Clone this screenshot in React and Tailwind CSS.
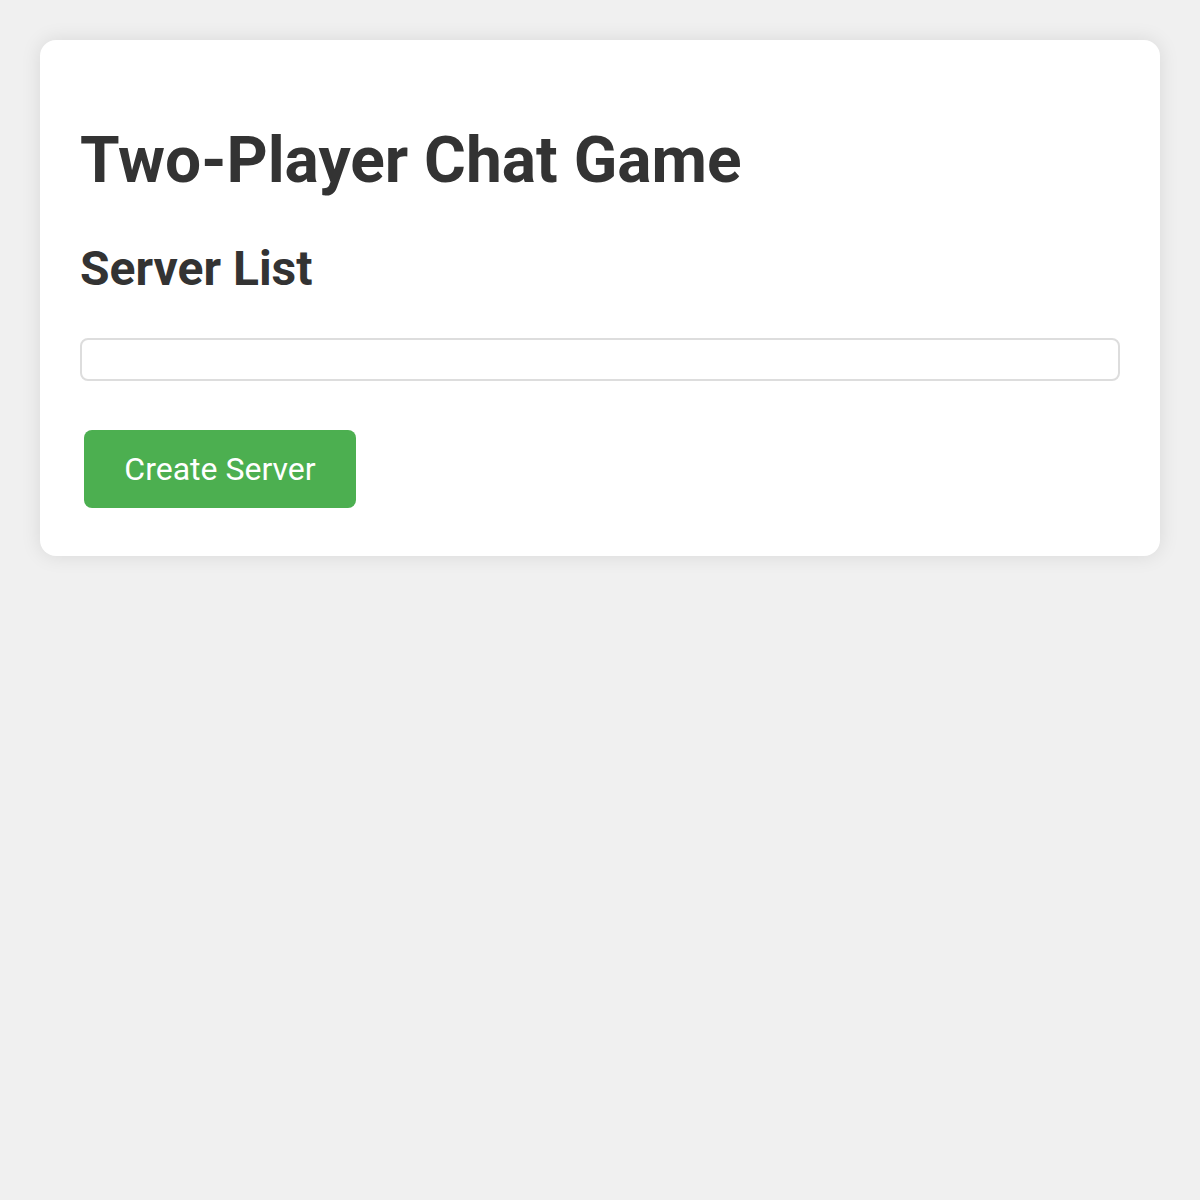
export default function App() {
  return (
    <div className="min-h-[1200px] bg-[#f0f0f0] p-10" style={{ fontFamily: "Roboto, 'Liberation Sans', sans-serif" }}>
      <div className="rounded-2xl bg-white px-10 pt-10 pb-12 shadow-[0_0_20px_rgba(0,0,0,0.1)] text-[#333]">
        <h1 className="text-[64px] font-bold leading-[75px] mt-[43px] mb-[43px]">Two-Player Chat Game</h1>
        <h2 className="text-[48px] font-bold leading-[56px] mb-[41px]">Server List</h2>
        <div className="h-[43px] rounded-lg border-2 border-[#ddd]"></div>
        <button className="ml-1 mt-[49px] h-[78px] w-[272px] rounded-lg bg-[#4CAF50] text-[32px] leading-[37px] text-white">
          Create Server
        </button>
      </div>
    </div>
  );
}
